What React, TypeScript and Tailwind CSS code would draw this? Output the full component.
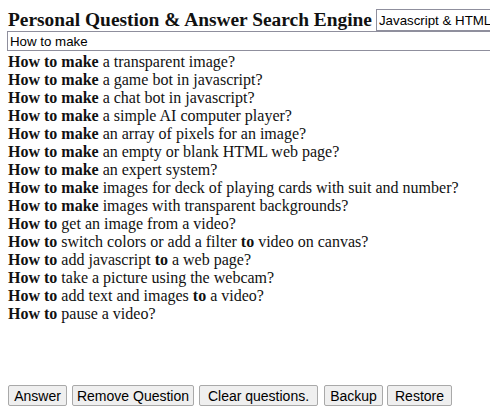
import React from "react";

const questions: [string, string][] = [
  ["How to make", " a transparent image?"],
  ["How to make", " a game bot in javascript?"],
  ["How to make", " a chat bot in javascript?"],
  ["How to make", " a simple AI computer player?"],
  ["How to make", " an array of pixels for an image?"],
  ["How to make", " an empty or blank HTML web page?"],
  ["How to make", " an expert system?"],
  ["How to make", " images for deck of playing cards with suit and number?"],
  ["How to make", " images with transparent backgrounds?"],
  ["How to", " get an image from a video?"],
];

function Line({ children }: { children: React.ReactNode }) {
  return <div className="whitespace-nowrap">{children}</div>;
}

const buttonClass =
  "h-[21px] shrink-0 border border-[#a9a9a9] bg-[#efefef] rounded-[2px] text-[14px] text-black [font-family:'Liberation_Sans',Arial,sans-serif] leading-none";

export default function App() {
  return (
    <div className="flex flex-col w-[490px] h-[407px] overflow-hidden bg-white text-[#111] [font-family:'Liberation_Serif','Times_New_Roman',serif]">
      <div className="flex items-center pl-[8px] pt-[9px] gap-[4px] whitespace-nowrap">
        <h3 className="text-[19.4px] font-bold leading-[22px]">
          Personal Question &amp; Answer Search Engine
        </h3>
        <input
          defaultValue="Javascript & HTML"
          className="block h-[22px] w-[140px] shrink-0 border border-[#8f8f9d] px-[2px] text-[13.3px] text-black [font-family:'Liberation_Sans',Arial,sans-serif] outline-none"
        />
      </div>
      <div className="pl-[7px]">
        <input
          defaultValue="How to make"
          className="block h-[20px] w-[490px] border border-[#8f8f9d] px-[2px] text-[13.3px] text-black [font-family:'Liberation_Sans',Arial,sans-serif] outline-none"
        />
      </div>
      <div className="pl-[8px] pt-[2px] text-[16px] leading-[18px]">
        {questions.map(([b, r], i) => (
          <Line key={i}>
            <b>{b}</b>
            {r}
          </Line>
        ))}
        <Line>
          <b>How to</b> switch colors or add a filter <b>to</b> video on canvas?
        </Line>
        <Line>
          <b>How to</b> add javascript <b>to</b> a web page?
        </Line>
        <Line>
          <b>How to</b> take a picture using the webcam?
        </Line>
        <Line>
          <b>How to</b> add text and images <b>to</b> a video?
        </Line>
        <Line>
          <b>How to</b> pause a video?
        </Line>
      </div>
      <div className="mt-auto flex items-center pl-[8px] pb-[1px]">
        <button className={`${buttonClass} w-[59px]`}>Answer</button>
        <button className={`${buttonClass} w-[122px] ml-[5px]`}>Remove Question</button>
        <button className={`${buttonClass} w-[119px] ml-[5px]`}>Clear questions.</button>
        <button className={`${buttonClass} w-[59px] ml-[6px]`}>Backup</button>
        <button className={`${buttonClass} w-[65px] ml-[4px]`}>Restore</button>
      </div>
    </div>
  );
}
